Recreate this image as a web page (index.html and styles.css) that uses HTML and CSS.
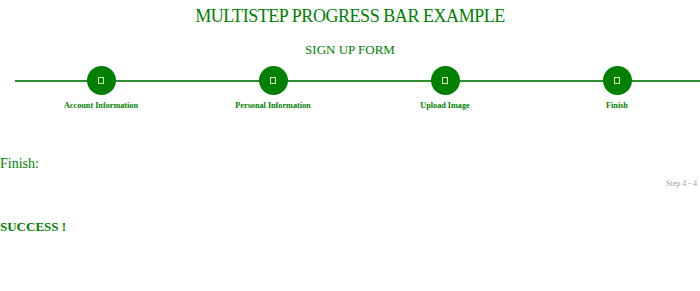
FILE: index.html
```html
<!DOCTYPE html>
<html lang="en">
<head>
  <meta charset="UTF-8">
  <title>Multistep Progress Bar</title>
  <link rel="stylesheet" href="styles.css">
</head>
<body>
  <h1 class="title">MULTISTEP PROGRESS BAR EXAMPLE</h1>
  <h2 class="subtitle">SIGN UP FORM</h2>

  <!-- Progress steps -->
  <ul class="progressbar">
    <li class="step">
      <span class="dot"><svg class="tofu" width="6" height="7" viewBox="0 0 6 7"><rect x="0.5" y="0.5" width="5" height="6" fill="none" stroke="#dfe9b8"/></svg></span>
      <strong class="label">Account Information</strong>
    </li>
    <li class="step">
      <span class="dot"><svg class="tofu" width="6" height="7" viewBox="0 0 6 7"><rect x="0.5" y="0.5" width="5" height="6" fill="none" stroke="#dfe9b8"/></svg></span>
      <strong class="label">Personal Information</strong>
    </li>
    <li class="step">
      <span class="dot"><svg class="tofu" width="6" height="7" viewBox="0 0 6 7"><rect x="0.5" y="0.5" width="5" height="6" fill="none" stroke="#dfe9b8"/></svg></span>
      <strong class="label">Upload Image</strong>
    </li>
    <li class="step">
      <span class="dot"><svg class="tofu" width="6" height="7" viewBox="0 0 6 7"><rect x="0.5" y="0.5" width="5" height="6" fill="none" stroke="#dfe9b8"/></svg></span>
      <strong class="label">Finish</strong>
    </li>
  </ul>

  <!-- Final step -->
  <fieldset class="panel">
    <h2 class="panel-title">Finish:</h2>
    <div class="steps">Step 4 - 4</div>
    <h3 class="success">SUCCESS !</h3>
  </fieldset>
</body>
</html>
```

FILE: styles.css
```css
* {
  box-sizing: border-box;
  margin: 0;
  padding: 0;
}
html, body {
  overflow: hidden;
}
body {
  font-family: "Liberation Serif", "Times New Roman", serif;
  background: #fff;
  color: #008000;
  width: 700px;
  height: 291px;
}
/* Headings */
.title {
  font-size: 18px;
  font-weight: normal;
  letter-spacing: -0.45px;
  text-align: center;
  line-height: 23px;
  margin-top: 5px;
}
.subtitle {
  font-size: 13px;
  font-weight: normal;
  text-align: center;
  line-height: 17px;
  margin-top: 13px;
}
/* Progress bar */
.progressbar {
  list-style: none;
  display: flex;
  width: 688px;
  margin: 8px 0 0 15px;
  background: linear-gradient(#2f8f2f, #2f8f2f) no-repeat 0 14px / 100% 2px;
}
.step {
  flex: 1;
  display: flex;
  flex-direction: column;
  align-items: center;
}
.dot {
  width: 29px;
  height: 29px;
  border-radius: 50%;
  background: #008000;
  display: flex;
  align-items: center;
  justify-content: center;
}
.tofu {
  display: block;
}
.label {
  font-size: 8.2px;
  line-height: 11px;
  margin-top: 5px;
}
/* Final panel */
.panel {
  border: none;
  margin-top: 44px;
}
.panel-title {
  font-size: 14px;
  font-weight: normal;
  line-height: 17px;
}
.steps {
  text-align: right;
  color: #9e9e9e;
  font-size: 8px;
  line-height: 11px;
  padding-right: 3px;
  margin-top: 6px;
}
.success {
  font-size: 13px;
  line-height: 15px;
  margin-top: 30px;
}
```
